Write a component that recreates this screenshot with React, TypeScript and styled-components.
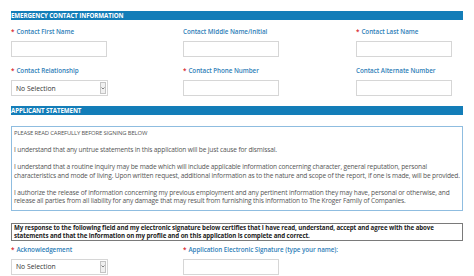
import { createGlobalStyle } from 'styled-components';
import styled from 'styled-components';

const GlobalStyle = createGlobalStyle`
  html, body {
    margin: 0;
    padding: 0;
    background: #ffffff;
  }
  body {
    font-family: "Open Sans", "Liberation Sans", sans-serif;
    color: #444;
  }
`;

const Page = styled.div`
  width: 452px;
  padding: 11px 0 0 11px;
`;

const SectionHeader = styled.div`
  height: 9px;
  background: #137db8;
  color: #fff;
  font-size: 6.2px;
  font-weight: 700;
  line-height: 9px;
  padding-left: 0;
  letter-spacing: -0.1px;
`;

const FieldGrid = styled.div<{ $top?: number }>`
  display: grid;
  grid-template-columns: 172px 173px 107px;
  row-gap: 10px;
  padding: ${(p) => p.$top ?? 8}px 0 10px;
`;

const Field = styled.div`
  display: flex;
  flex-direction: column;
  gap: 5px;
`;

const Label = styled.div`
  font-size: 6.3px;
  line-height: 8px;
  height: 8px;
  color: #3080b8;
  font-weight: 600;
  letter-spacing: -0.05px;
  white-space: nowrap;
`;

const Req = styled.span`
  color: #d8262c;
  margin-right: 2px;
`;

const TextBox = styled.div`
  box-sizing: border-box;
  width: 96px;
  height: 16px;
  border: 1px solid #d6d6d6;
  background: #fff;
`;

const SelectBox = styled.div`
  box-sizing: border-box;
  width: 97px;
  height: 16px;
  border: 1px solid #d6d6d6;
  display: flex;
  align-items: center;
  justify-content: space-between;
  padding: 0 1px 0 4px;
  font-size: 6.8px;
  color: #333;
`;

const Arrow = styled.div`
  box-sizing: border-box;
  width: 6px;
  height: 12px;
  border: 1px solid #c4c4c4;
  background: #f0f0f0;
  display: flex;
  align-items: center;
  justify-content: center;
`;

const Statement = styled.div`
  box-sizing: border-box;
  width: 452px;
  border: 1px solid #8fbde0;
  padding: 2px 2px 4px 2px;
  font-size: 6.6px;
  line-height: 8.5px;
  color: #555;
  letter-spacing: -0.15px;
`;

const Certify = styled.div`
  box-sizing: border-box;
  width: 452px;
  border: 1px solid #7a7a7a;
  padding: 0 2px;
  font-size: 6.2px;
  line-height: 8px;
  color: #222;
  font-weight: 700;
  letter-spacing: -0.1px;
`;

const Para = styled.p<{ $caps?: boolean }>`
  margin: 0 0 8.5px;
  font-size: ${(p) => (p.$caps ? '5.9px' : 'inherit')};
  white-space: ${(p) => (p.$caps ? 'nowrap' : 'normal')};
  &:last-child {
    margin-bottom: 0;
  }
`;

const Gap = styled.div<{ $h: number }>`
  height: ${(p) => p.$h}px;
`;

function Chevron() {
  return (
    <svg width="4" height="3" viewBox="0 0 4 3">
      <path d="M0.5 0.5 L2 2 L3.5 0.5" stroke="#666" strokeWidth="0.8" fill="none" />
    </svg>
  );
}

function Select() {
  return (
    <SelectBox>
      No Selection
      <Arrow>
        <Chevron />
      </Arrow>
    </SelectBox>
  );
}

export default function App() {
  return (
    <>
      <GlobalStyle />
      <Page>
        <SectionHeader>EMERGENCY CONTACT INFORMATION</SectionHeader>
        <FieldGrid>
          <Field>
            <Label><Req>*</Req>Contact First Name</Label>
            <TextBox />
          </Field>
          <Field>
            <Label>Contact Middle Name/Initial</Label>
            <TextBox />
          </Field>
          <Field>
            <Label><Req>*</Req>Contact Last Name</Label>
            <TextBox />
          </Field>
          <Field>
            <Label><Req>*</Req>Contact Relationship</Label>
            <Select />
          </Field>
          <Field>
            <Label><Req>*</Req>Contact Phone Number</Label>
            <TextBox />
          </Field>
          <Field>
            <Label>Contact Alternate Number</Label>
            <TextBox />
          </Field>
        </FieldGrid>
        <SectionHeader>APPLICANT STATEMENT</SectionHeader>
        <Gap $h={11} />
        <Statement>
          <Para $caps>PLEASE READ CAREFULLY BEFORE SIGNING BELOW</Para>
          <Para>I understand that any untrue statements in this application will be just cause for dismissal.</Para>
          <Para>
            I understand that a routine inquiry may be made which will include applicable information concerning character, general reputation, personal characteristics and mode of living. Upon written request, additional information as to the nature and scope of the report, if one is made, will be provided.
          </Para>
          <Para>
            I authorize the release of information concerning my previous employment and any pertinent information they may have, personal or otherwise, and release all parties from all liability for any damage that may result from furnishing this information to The Kroger Family of Companies.
          </Para>
        </Statement>
        <Gap $h={12} />
        <Certify>
          My response to the following field and my electronic signature below certifies that I have read, understand, accept and agree with the above statements and that the information on my profile and on this application is complete and correct.
        </Certify>
        <FieldGrid $top={5}>
          <Field>
            <Label><Req>*</Req>Acknowledgement</Label>
            <Select />
          </Field>
          <Field>
            <Label><Req>*</Req>Application Electronic Signature (type your name):</Label>
            <TextBox />
          </Field>
        </FieldGrid>
      </Page>
    </>
  );
}
